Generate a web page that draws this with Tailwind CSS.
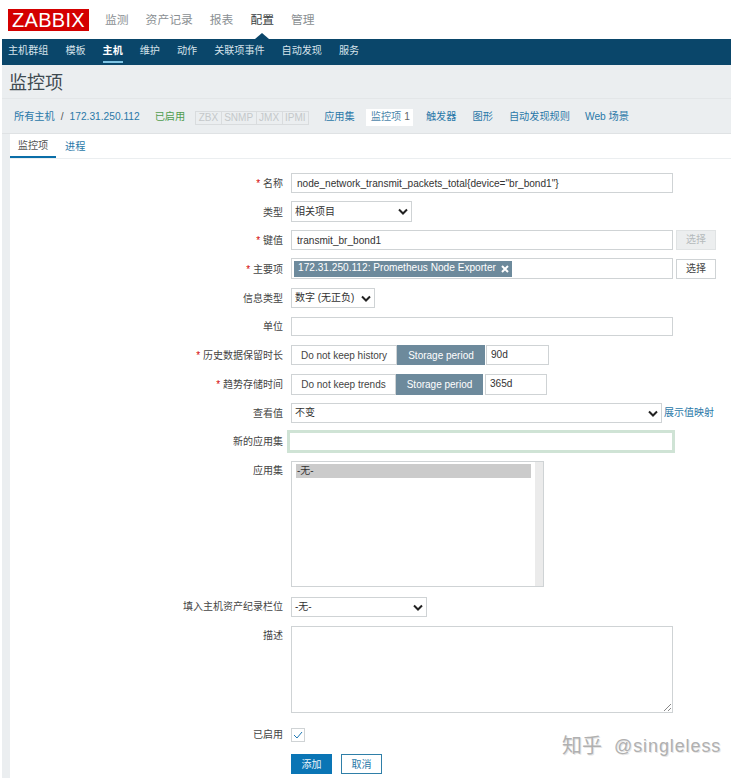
<!DOCTYPE html>
<html lang="zh">
<head>
<meta charset="utf-8">
<script src="https://cdn.jsdelivr.net/npm/@tailwindcss/browser@4"></script>
</head>
<body class="m-0 bg-white">
<div class="relative w-[731px] h-[778px] overflow-hidden bg-white font-['Liberation_Sans','Noto_Sans_CJK_SC',sans-serif] text-[10px] text-[#444] leading-none">
  <header class="flex items-center h-[39px] pl-[8px]">
    <div class="w-[81px] h-[22px] bg-[#d40000] text-white text-[20px] flex items-center justify-center tracking-[0.3px] mr-[16px]">ZABBIX</div>
    <nav class="flex items-center gap-[17px] pt-[3px] text-[11.8px] text-[#8a8f93]">
      <span>监测</span><span>资产记录</span><span>报表</span><span class="text-[#3a3f42]">配置</span><span>管理</span>
    </nav>
  </header>
  <div class="relative h-[26px] ml-[2px] bg-[#0a466a] flex items-center pl-[6px] pb-[1px] gap-[17px] text-[10.1px] text-[#d7e3ea]">
    <span>主机群组</span><span>模板</span><span class="relative text-white font-bold">主机<i class="absolute left-0 right-0 top-[15px] h-[2px] bg-[#7fc4e4]"></i></span><span>维护</span><span>动作</span><span>关联项事件</span><span>自动发现</span><span>服务</span>
    <i class="absolute left-[253px] top-[-6px] w-0 h-0 border-x-[7px] border-x-transparent border-b-[6px] border-b-[#0a466a]"></i>
  </div>
  <main class="ml-[2px] bg-[#ebeef0]">
    <h1 class="h-[34px] flex items-center pl-[7px] pt-[2px] text-[18px] font-normal text-[#3f4a50] border-b border-[#e3e6e8]">监控项</h1>
    <div class="h-[35px] flex items-center pl-[12px] pt-[3px] text-[10.2px] text-[#2a78a8] border-b border-[#dfe2e4]">
      <span>所有主机</span><span class="mx-[6px] text-[#555]">/</span><span>172.31.250.112</span>
      <span class="ml-[15px] text-[#4f9d4f]">已启用</span>
      <div class="ml-[10px] flex h-[14px] border border-[#d9dcde] text-[#c4c8ca] items-center text-[10px]">
        <span class="px-[2.5px] border-r border-[#d9dcde] h-full flex items-center">ZBX</span><span class="px-[2.5px] border-r border-[#d9dcde] h-full flex items-center">SNMP</span><span class="px-[2.5px] border-r border-[#d9dcde] h-full flex items-center">JMX</span><span class="px-[2.5px] h-full flex items-center">IPMI</span>
      </div>
      <span class="ml-[15px]">应用集</span>
      <span class="ml-[11px] h-[17px] pl-[5px] pr-[3px] bg-white text-[#4d87ab] flex items-center">监控项 <span class="ml-[3px] text-[#666]">1</span></span>
      <span class="ml-[13px]">触发器</span><span class="ml-[16px]">图形</span><span class="ml-[16px]">自动发现规则</span><span class="ml-[15px]">Web 场景</span>
    </div>
    <div class="ml-[8px] bg-white h-[645px]">
      <div class="h-[25px] flex items-center border-b border-[#ebeef0] text-[10.2px]">
        <span class="w-[46px] text-center text-[#555] h-full flex items-center justify-center pt-[2px] border-b-2 border-[#0a6ea8]">监控项</span>
        <span class="ml-[9px] pt-[3px] text-[#2a78a8]">进程</span>
      </div>
      <form class="flex flex-col pt-[14px]">
        <div class="flex items-center h-[20px] mb-[8px]">
          <label class="w-[281px] text-right pr-[8px] pt-[2px]"><span class="text-[#d40000]">*</span> 名称</label>
          <div class="w-[382px] h-[20px] border border-[#cfd3d5] flex items-center px-[5px] pt-[2px] text-[10.1px] text-[#333]">node_network_transmit_packets_total{device="br_bond1"}</div>
        </div>
        <div class="flex items-center h-[21px] mb-[8px]">
          <label class="w-[281px] text-right pr-[8px] pt-[2px]">类型</label>
          <div class="w-[121px] h-[21px] border border-[#cfd3d5] flex items-center justify-between px-[3px] text-[10px] text-[#333]">相关项目<svg width="10" height="7" viewBox="0 0 10 7"><path d="M1 1.5 5 5.5 9 1.5" fill="none" stroke="#222" stroke-width="2"/></svg></div>
        </div>
        <div class="flex items-center h-[20px] mb-[8px]">
          <label class="w-[281px] text-right pr-[8px] pt-[2px]"><span class="text-[#d40000]">*</span> 键值</label>
          <div class="w-[382px] h-[20px] border border-[#cfd3d5] flex items-center px-[5px] pt-[2px] text-[10.1px] text-[#333]">transmit_br_bond1</div>
          <div class="ml-[3px] w-[40px] h-[20px] bg-[#eceeef] border border-[#e0e3e4] text-[#b5babc] flex items-center justify-center">选择</div>
        </div>
        <div class="flex items-center h-[21px] mb-[9px]">
          <label class="w-[281px] text-right pr-[8px] pt-[2px]"><span class="text-[#d40000]">*</span> 主要项</label>
          <div class="w-[382px] h-[21px] border border-[#cfd3d5] flex items-center px-[2px]">
            <span class="h-[16px] bg-[#6d8a9c] text-white text-[10.14px] flex items-center pl-[4px] pr-[3px]">172.31.250.112: Prometheus Node Exporter
              <svg class="ml-[5px]" width="8" height="8" viewBox="0 0 8 8"><path d="M1 1 7 7M7 1 1 7" stroke="#fff" stroke-width="2"/></svg></span>
          </div>
          <div class="ml-[3px] w-[40px] h-[20px] border border-[#cfd3d5] text-[#444] flex items-center justify-center">选择</div>
        </div>
        <div class="flex items-center h-[20px] mb-[9px]">
          <label class="w-[281px] text-right pr-[8px] pt-[2px]">信息类型</label>
          <div class="w-[84px] h-[20px] border border-[#cfd3d5] flex items-center justify-between px-[3px] text-[10px] text-[#333]">数字 (无正负)<svg width="10" height="7" viewBox="0 0 10 7"><path d="M1 1.5 5 5.5 9 1.5" fill="none" stroke="#222" stroke-width="2"/></svg></div>
        </div>
        <div class="flex items-center h-[19px] mb-[9px]">
          <label class="w-[281px] text-right pr-[8px]">单位</label>
          <div class="w-[382px] h-[19px] border border-[#cfd3d5]"></div>
        </div>
        <div class="flex items-center h-[20px] mb-[9px]">
          <label class="w-[281px] text-right pr-[8px] pt-[2px]"><span class="text-[#d40000]">*</span> 历史数据保留时长</label>
          <div class="w-[106px] h-[20px] border border-[#cfd3d5] flex items-center justify-center pt-[1px] text-[10px]">Do not keep history</div>
          <div class="w-[88px] h-[20px] bg-[#6d8a9c] text-white flex items-center justify-center pt-[1px] text-[10px]">Storage period</div>
          <div class="ml-[1px] w-[63px] h-[20px] border border-[#cfd3d5] flex items-center px-[4px] pt-[1px] text-[10.1px] text-[#333]">90d</div>
        </div>
        <div class="flex items-center h-[21px] mb-[8px]">
          <label class="w-[281px] text-right pr-[8px]"><span class="text-[#d40000]">*</span> 趋势存储时间</label>
          <div class="w-[105px] h-[21px] border border-[#cfd3d5] flex items-center justify-center text-[10px]">Do not keep trends</div>
          <div class="w-[87px] h-[21px] bg-[#6d8a9c] text-white flex items-center justify-center text-[10px]">Storage period</div>
          <div class="ml-[2px] w-[62px] h-[21px] border border-[#cfd3d5] flex items-center px-[4px] text-[10.1px] text-[#333]">365d</div>
        </div>
        <div class="flex items-center h-[20px] mb-[7px]">
          <label class="w-[281px] text-right pr-[8px] pt-[2px]">查看值</label>
          <div class="w-[371px] h-[20px] border border-[#cfd3d5] flex items-center justify-between px-[3px] text-[10px] text-[#333]">不变<svg width="10" height="7" viewBox="0 0 10 7"><path d="M1 1.5 5 5.5 9 1.5" fill="none" stroke="#222" stroke-width="2"/></svg></div>
          <span class="ml-[2px] text-[#2a78a8]">展示值映射</span>
        </div>
        <div class="flex items-center h-[23px] mb-[8px]">
          <label class="w-[277px] text-right pr-[4px]">新的应用集</label>
          <div class="w-[388px] h-[23px] border-[3px] border-[#cfe3d5] bg-white"></div>
        </div>
        <div class="flex items-start h-[126px] mb-[10px]">
          <label class="w-[281px] text-right pr-[8px] pt-[5px]">应用集</label>
          <div class="relative w-[253px] h-[126px] border border-[#cfd3d5] pt-[2px] pl-[4px] pr-[12px]">
            <div class="h-[14px] bg-[#cbcbcb] flex items-center pl-[1px] text-[#333]">-无-</div>
            <i class="absolute right-0 top-0 bottom-0 w-[8px] bg-[#ebebeb]"></i>
          </div>
        </div>
        <div class="flex items-center h-[20px] mb-[9px]">
          <label class="w-[281px] text-right pr-[8px]">填入主机资产纪录栏位</label>
          <div class="w-[136px] h-[20px] border border-[#cfd3d5] flex items-center justify-between px-[3px] text-[10px] text-[#333]">-无-<svg width="10" height="7" viewBox="0 0 10 7"><path d="M1 1.5 5 5.5 9 1.5" fill="none" stroke="#222" stroke-width="2"/></svg></div>
        </div>
        <div class="flex items-start h-[87px] mb-[14px]">
          <label class="w-[281px] text-right pr-[8px] pt-[5px]">描述</label>
          <div class="relative w-[382px] h-[87px] border border-[#cfd3d5]">
            <svg class="absolute right-0 bottom-0" width="9" height="9" viewBox="0 0 9 9"><path d="M1 8 8 1M5 8 8 5" stroke="#888"/></svg>
          </div>
        </div>
        <div class="flex items-center h-[16px] mb-[11px]">
          <label class="w-[281px] text-right pr-[8px]">已启用</label>
          <div class="w-[14px] h-[14px] border border-[#cfd3d5] flex items-center justify-center"><svg width="10" height="8" viewBox="0 0 10 8"><path d="M1 4 4 7 9 1" fill="none" stroke="#1f78b4"/></svg></div>
        </div>
        <div class="flex items-center h-[20px] pl-[281px]">
          <div class="w-[41px] h-[20px] bg-[#0a75b5] text-[#eaf4fa] flex items-center justify-center pt-[1px]">添加</div>
          <div class="ml-[9px] w-[41px] h-[20px] border border-[#2f7fa8] text-[#2a78a8] flex items-center justify-center pt-[1px]">取消</div>
        </div>
      </form>
    </div>
  </main>
  <div class="absolute left-[562px] top-[736px] flex items-center gap-[12px] text-[#b0b0b0] whitespace-nowrap [text-shadow:1px_1px_0_#e6e6e6]">
    <span class="text-[20px]">知乎</span><span class="text-[18px] tracking-[0.9px]">@singleless</span>
  </div>
</div>
</body>
</html>
